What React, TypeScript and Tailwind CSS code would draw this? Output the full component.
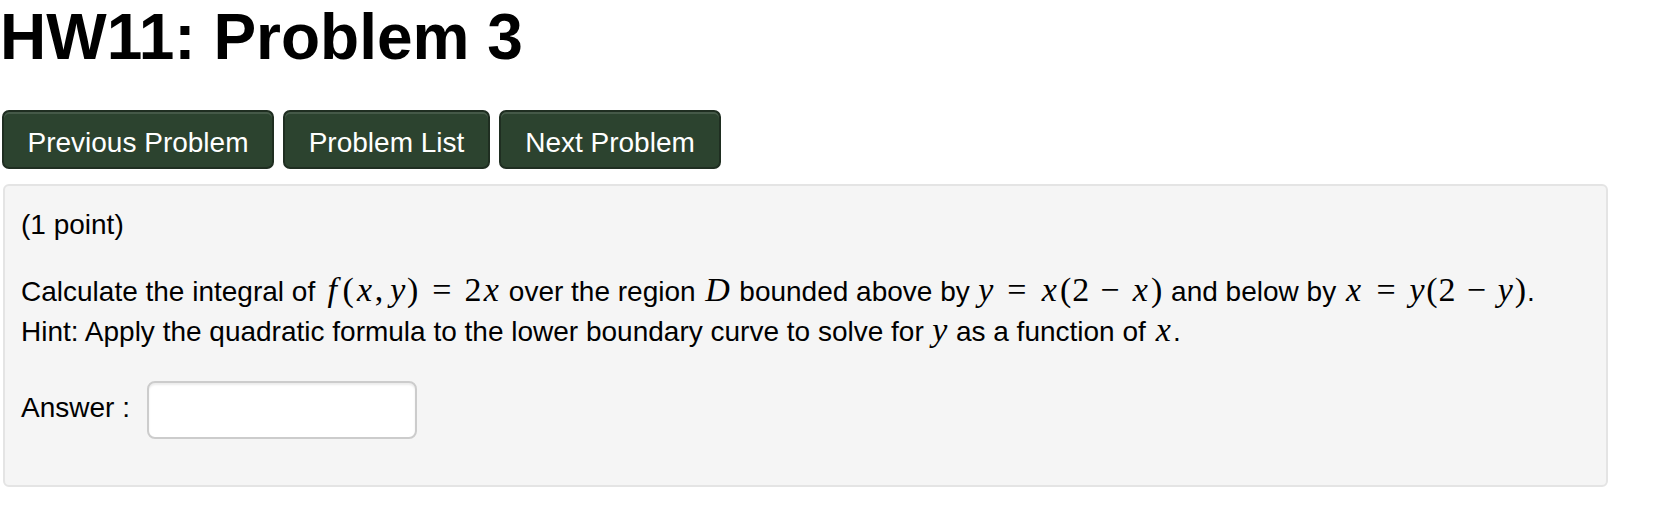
import React from 'react';

// widths follow TeX font metrics so the math runs as wide as in the screenshot
const glyph: Record<string, string> = {
  f: 'w-[0.55em] italic',
  x: 'w-[0.572em] italic',
  y: 'w-[0.49em] italic',
  D: 'w-[0.828em] italic',
  '(': 'w-[0.389em]',
  ')': 'w-[0.389em]',
  ',': 'w-[0.278em] mr-[0.167em]',
  '=': 'w-[0.778em] mx-[0.278em]',
  '−': 'w-[0.778em] mx-[0.222em]',
  '2': 'w-[0.5em]',
};

const Tex = ({ expr }: { expr: string }) => (
  <span className="font-['Liberation_Serif',serif] text-[34px] leading-[34px] whitespace-nowrap">
    {Array.from(expr).map((ch, i) => (
      <span key={i} className={`inline-block text-center ${glyph[ch] ?? ''}`}>
        {ch}
      </span>
    ))}
  </span>
);

const NavButton = ({ label, width }: { label: string; width: string }) => (
  <button
    className={`h-[59px] ${width} rounded-[7px] border-2 border-[#1f2e21] bg-[#2c432f] pt-[7px] text-center align-top text-[28px] leading-[40px] text-white shadow-[inset_0_2px_0_rgba(255,255,255,0.12)]`}
  >
    {label}
  </button>
);

const App = () => {
  return (
    <div className="min-h-screen bg-white font-['Liberation_Sans',Arial,sans-serif] text-black">
      <h1 className="pt-[2px] text-[64px] font-bold leading-[70px] text-black">HW11: Problem 3</h1>

      <div className="mt-[38px] ml-[2px] flex gap-[9px]">
        <NavButton label="Previous Problem" width="w-[272px]" />
        <NavButton label="Problem List" width="w-[207px]" />
        <NavButton label="Next Problem" width="w-[222px]" />
      </div>

      <div className="mt-[15px] ml-[3px] w-[1605px] rounded-[6px] border-2 border-[#e4e4e4] bg-[#f5f5f5] px-[16px] pt-[19px] pb-[46px] text-[28px] leading-[40px]">
        <p>(1 point)</p>

        <p className="mt-[27px]">
          Calculate the integral of <Tex expr="f(x,y)=2x" /> over the region <Tex expr="D" /> bounded above by{' '}
          <Tex expr="y=x(2−x)" /> and below by <Tex expr="x=y(2−y)" />.
          <br />
          Hint: Apply the quadratic formula to the lower boundary curve to solve for <Tex expr="y" /> as a function of{' '}
          <Tex expr="x" />.
        </p>

        <div className="mt-[29px] flex items-start gap-[17px]">
          <span className="mt-[7px]">Answer :</span>
          <input
            type="text"
            className="h-[58px] w-[270px] rounded-[8px] border-2 border-[#cccccc] bg-white shadow-[inset_0_2px_2px_rgba(0,0,0,0.08)] outline-none"
          />
        </div>
      </div>
    </div>
  );
};

export default App;
